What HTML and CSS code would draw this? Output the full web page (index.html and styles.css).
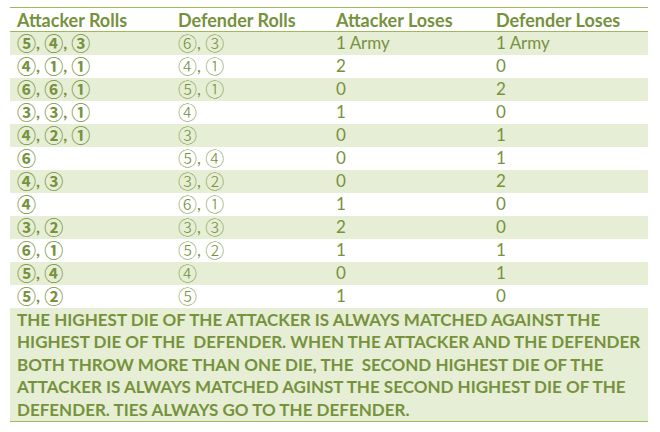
FILE: index.html
```html
<!DOCTYPE html>
<html>
<head>
<meta charset="utf-8">
<link rel="stylesheet" href="styles.css">
</head>
<body>
<table class="dice">
  <colgroup>
    <col class="c1"><col class="c2"><col class="c3"><col class="c4">
  </colgroup>
  <thead>
    <tr class="head"><th>Attacker Rolls</th><th>Defender Rolls</th><th>Attacker Loses</th><th>Defender Loses</th></tr>
  </thead>
  <tbody>
    <tr class="band"><td class="first"><span class="d">⑤</span>, <span class="d">④</span>, <span class="d">③</span></td><td class="dd"><span class="d">⑥</span>, <span class="d">③</span></td><td>1 Army</td><td>1 Army</td></tr>
    <tr><td class="first"><span class="d">④</span>, <span class="d">①</span>, <span class="d">①</span></td><td class="dd"><span class="d">④</span>, <span class="d">①</span></td><td>2</td><td>0</td></tr>
    <tr class="band"><td class="first"><span class="d">⑥</span>, <span class="d">⑥</span>, <span class="d">①</span></td><td class="dd"><span class="d">⑤</span>, <span class="d">①</span></td><td>0</td><td>2</td></tr>
    <tr><td class="first"><span class="d">③</span>, <span class="d">③</span>, <span class="d">①</span></td><td class="dd top"><span class="d">④</span></td><td>1</td><td>0</td></tr>
    <tr class="band"><td class="first"><span class="d">④</span>, <span class="d">②</span>, <span class="d">①</span></td><td class="dd top"><span class="d">③</span></td><td>0</td><td>1</td></tr>
    <tr><td class="first top"><span class="d">⑥</span></td><td class="dd"><span class="d">⑤</span>, <span class="d">④</span></td><td>0</td><td>1</td></tr>
    <tr class="band"><td class="first"><span class="d">④</span>, <span class="d">③</span></td><td class="dd"><span class="d">③</span>, <span class="d">②</span></td><td>0</td><td>2</td></tr>
    <tr><td class="first top"><span class="d">④</span></td><td class="dd"><span class="d">⑥</span>, <span class="d">①</span></td><td>1</td><td>0</td></tr>
    <tr class="band"><td class="first"><span class="d">③</span>, <span class="d">②</span></td><td class="dd"><span class="d">③</span>, <span class="d">③</span></td><td>2</td><td>0</td></tr>
    <tr><td class="first"><span class="d">⑥</span>, <span class="d">①</span></td><td class="dd"><span class="d">⑤</span>, <span class="d">②</span></td><td>1</td><td>1</td></tr>
    <tr class="band"><td class="first"><span class="d">⑤</span>, <span class="d">④</span></td><td class="dd top"><span class="d">④</span></td><td>0</td><td>1</td></tr>
    <tr><td class="first"><span class="d">⑤</span>, <span class="d">②</span></td><td class="dd top"><span class="d">⑤</span></td><td>1</td><td>0</td></tr>
    <tr class="band note"><td colspan="4">THE HIGHEST DIE OF THE ATTACKER IS ALWAYS MATCHED AGAINST THE<br>HIGHEST DIE OF THE&nbsp; DEFENDER. WHEN THE ATTACKER AND THE DEFENDER<br>BOTH THROW MORE THAN ONE DIE, THE&nbsp; SECOND HIGHEST DIE OF THE<br>ATTACKER IS ALWAYS MATCHED AGINST THE SECOND HIGHEST DIE OF THE<br>DEFENDER. TIES ALWAYS GO TO THE DEFENDER.</td></tr>
  </tbody>
</table>
</body>
</html>
```
FILE: styles.css
```css
html, body {
  margin: 0;
  padding: 0;
  background: #ffffff;
}
body {
  padding: 7px 0 0 10px;
  font-family: Lato, "Noto Sans CJK JP", sans-serif;
  color: #76923c;
}
.dice {
  border-collapse: collapse;
  table-layout: fixed;
  width: 638px;
  border-top: 1px solid #9bbb59;
  border-bottom: 1px solid #9bbb59;
}
.c1 { width: 161px; }
.c2 { width: 158px; }
.c3 { width: 160px; }
.c4 { width: 159px; }
.dice th, .dice td {
  padding: 0 7px;
  text-align: left;
  vertical-align: middle;
  white-space: nowrap;
  font-size: 17px;
  line-height: 20px;
}
.head th {
  height: 22px;
  font-size: 18px;
  font-weight: bold;
  border-bottom: 1px solid #9bbb59;
  padding-top: 1px;
}
.dice tbody tr {
  height: 23px;
}
.dice tbody td {
  height: 23px;
  box-sizing: border-box;
}
.band {
  background: #e6eed5;
}
.first {
  font-weight: bold;
}
.dd {
  font-weight: normal;
}
.d {
  font-family: "Noto Sans CJK JP", sans-serif;
  font-size: 19px;
  line-height: 20px;
  display: inline-block;
  vertical-align: top;
}
.dd .d {
  font-weight: 300;
}
.top {
  vertical-align: top;
  padding-top: 0;
}
.note td {
  font-weight: bold;
  font-size: 17px;
  line-height: 22.6px;
  height: auto;
  padding-top: 1px;
  padding-bottom: 0;
}
```
